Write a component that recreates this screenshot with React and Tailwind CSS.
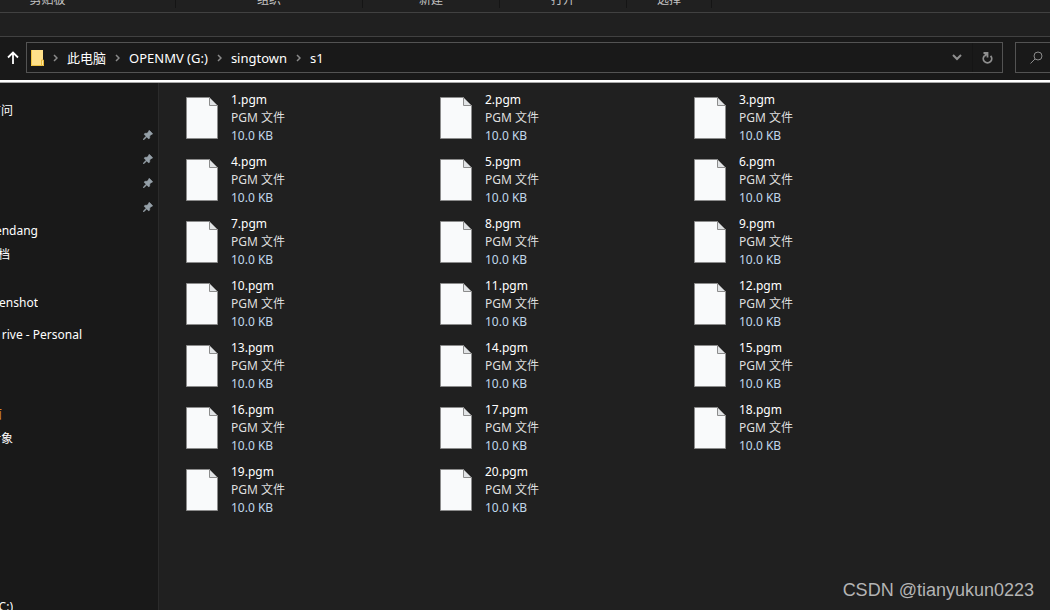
import React from "react";

const ribbonGroups = [
  { label: "剪贴板", width: "w-64 -ml-20" },
  { label: "组织", width: "w-[187px]" },
  { label: "新建", width: "w-[137px]" },
  { label: "打开", width: "w-[127px]" },
  { label: "选择", width: "w-[85px]" },
];

const crumbs = ["此电脑", "OPENMV (G:)", "singtown", "s1"];

// labels run off the left edge of the window, so each one is end-aligned
const treeItems = [
  { label: "访问", width: "w-[13px]" },
  { pinned: true },
  { pinned: true },
  { pinned: true },
  { pinned: true },
  { label: "endang", width: "w-[38px]" },
  { label: "文档", width: "w-[10px]" },
  {},
  { label: "enshot", width: "w-[38px]" },
  { label: "rive - Personal", width: "w-[82px]", gap: true },
  { gap: true },
  {},
  { label: "面", width: "w-[2px]", color: "text-[#d98a2b]" },
  { label: "对象", width: "w-[13px]" },
  {},
  {},
  {},
  {},
  {},
  {},
  { label: "C:)", width: "w-[13px]" },
];

const files = Array.from({ length: 20 }, (_, i) => `${i + 1}.pgm`);

function Chevron() {
  return (
    <svg width="5" height="8" viewBox="0 0 5 8" fill="none" stroke="#8a8a8a" strokeWidth="1.5">
      <path d="M1 1l3 3-3 3" />
    </svg>
  );
}

function FolderIcon() {
  return (
    <svg width="13" height="16" viewBox="0 0 13 16" className="shrink-0">
      <path d="M0 0h12v10h1v6H0z" fill="#ffe08a" />
      <path d="M.5 0v15.5h10" fill="none" stroke="#f0c443" />
      <path d="M10.5 15.5V10h2v5.500z" fill="#ffe79f" stroke="#e9b93a" />
    </svg>
  );
}

function PinIcon() {
  return (
    <svg width="10" height="10" viewBox="0 0 10 10" fill="#95a0a8" stroke="#95a0a8" strokeWidth=".6">
      <path d="M6.300 .3L9.700 3.700 9 4.500 8.300 4.400 6.700 6 6.700 8 5.800 8.900 3.700 6.900 1 9.700H.3V9L3.100 6.300 1.100 4.200 2 3.300 4 3.300 5.600 1.700 5.500 1z" />
    </svg>
  );
}

function FileIcon() {
  return (
    <svg width="32" height="42" viewBox="0 0 32 42" className="mt-1.5 shrink-0">
      <path d="M.5.5h23l8 8v33H.5z" fill="#f9fafb" stroke="#8c8c8c" />
      <path d="M23.500.500v8h8z" fill="#e1e3e5" stroke="#8c8c8c" />
    </svg>
  );
}

function Ribbon() {
  return (
    <div className="h-[37px] shrink-0 border-b border-[#414141] bg-[#202020]">
      <div className="flex h-[13px] border-b border-[#414141]">
        {ribbonGroups.map((group) => (
          <div
            key={group.label}
            className={`flex h-2 shrink-0 items-end justify-center border-r border-[#151515] text-[#c4c4c4] ${group.width}`}
          >
            <span className="leading-4">{group.label}</span>
          </div>
        ))}
      </div>
    </div>
  );
}

function AddressBar() {
  return (
    <div className="flex h-[45px] shrink-0 items-start border-b-2 border-white bg-[#191919] pt-[5px]">
      <button type="button" aria-label="Up" className="flex h-[31px] w-[26px] items-center justify-center">
        <svg width="12" height="13" viewBox="0 0 12 13" fill="none" stroke="#fff" strokeWidth="1.8">
          <path d="M6 13V1.500M1 6.500l5-5 5 5" />
        </svg>
      </button>
      <div className="flex h-[31px] flex-1 items-center border border-[#535353] pl-1">
        <FolderIcon />
        <ol className="flex flex-1 items-center text-[13px] leading-4">
          {crumbs.map((crumb) => (
            <li key={crumb} className="flex items-center pl-[9px]">
              <Chevron />
              <button type="button" className="pl-[9px] text-white">
                {crumb}
              </button>
            </li>
          ))}
        </ol>
        <button type="button" aria-label="History" className="flex h-full w-[30px] items-center justify-center">
          <svg width="10" height="7" viewBox="0 0 10 7" fill="none" stroke="#8f8f8f" strokeWidth="2">
            <path d="M1 1l4 4 4-4" />
          </svg>
        </button>
        <button type="button" aria-label="Refresh" className="flex h-full w-[30px] items-center justify-center border-l border-[#151515]">
          <svg width="11" height="12" viewBox="0 0 11 12" fill="none" stroke="#8f8f8f" strokeWidth="1.8">
            <path d="M8.600 3.800A4.200 4.200 0 1 1 2.400 3.800" />
            <path d="M1.500 1h4v4.500M5.500 1L2.500 4" />
          </svg>
        </button>
      </div>
      <button type="button" aria-label="Search" className="ml-3 flex h-[31px] w-[35px] items-center border border-r-0 border-[#535353] pl-3.5">
        <svg width="13" height="13" viewBox="0 0 13 13" fill="none" stroke="#8b8b8b">
          <circle cx="8" cy="5" r="4" />
          <path d="M5 8L.5 12.500" />
        </svg>
      </button>
    </div>
  );
}

function Sidebar() {
  return (
    <nav className="w-[159px] shrink-0 overflow-hidden border-r border-[#2b2b2b] bg-[#191919] pt-4">
      <ul>
        {treeItems.map((item, i) => (
          <li key={i} className={`flex h-6 items-center justify-between pr-[5px] ${item.gap ? "mt-2" : ""}`}>
            <span className={`flex justify-end overflow-hidden whitespace-nowrap ${item.width || ""} ${item.color || "text-white"}`}>
              {item.label}
            </span>
            {item.pinned && <PinIcon />}
          </li>
        ))}
      </ul>
    </nav>
  );
}

function FileTile({ name }) {
  return (
    <li className="flex gap-[13px]">
      <FileIcon />
      <div className="leading-[18px] text-[#dedede]">
        <div className="text-white">{name}</div>
        <div>PGM 文件</div>
        <div className="text-[#c0d8ec]">10.0 KB</div>
      </div>
    </li>
  );
}

function App() {
  return (
    <div className="relative flex h-screen flex-col overflow-hidden bg-[#202020] font-['Noto_Sans','Noto_Sans_CJK_SC',sans-serif] text-xs">
      <Ribbon />
      <AddressBar />
      <div className="flex min-h-0 flex-1 border-t border-[#a8a8a8]">
        <Sidebar />
        <main className="flex-1 pt-2 pl-[27px]">
          <ul className="grid grid-cols-[repeat(auto-fill,254px)] gap-y-2">
            {files.map((name) => (
              <FileTile key={name} name={name} />
            ))}
          </ul>
        </main>
      </div>
      <div className="absolute right-4 bottom-2 font-['Liberation_Sans',sans-serif] text-lg leading-6 text-[#b4b4b4]">
        CSDN @tianyukun0223
      </div>
    </div>
  );
}

export default App;
